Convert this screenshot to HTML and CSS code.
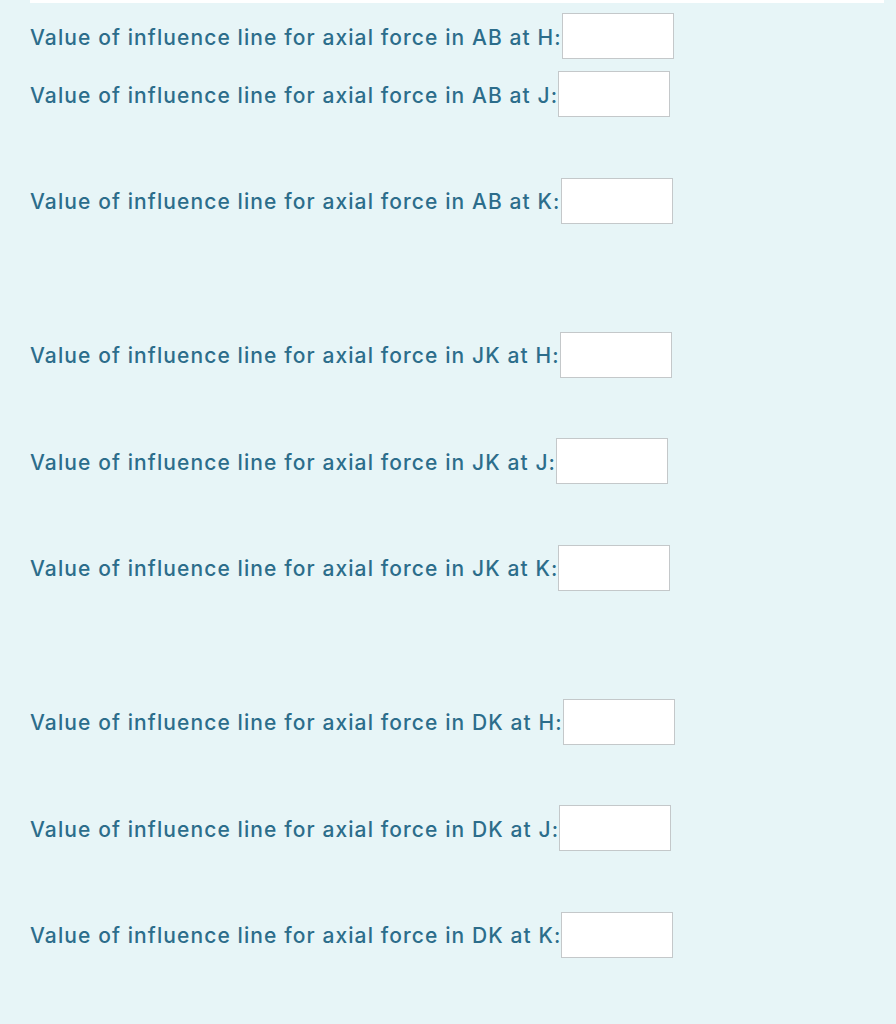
FILE: index.html
```html
<!DOCTYPE html>
<html>
<head>
<meta charset="utf-8">
<link rel="stylesheet" href="styles.css">
</head>
<body>
<div class="top-strip"></div>
<div class="form">
  <div class="row"><label>Value of influence line for axial force in AB at H:</label><input type="text"></div>
  <div class="row"><label>Value of influence line for axial force in AB at J:</label><input type="text"></div>
  <div class="row sp1"><label>Value of influence line for axial force in AB at K:</label><input type="text"></div>
  <div class="row sp2"><label>Value of influence line for axial force in JK at H:</label><input type="text"></div>
  <div class="row sp1"><label>Value of influence line for axial force in JK at J:</label><input type="text"></div>
  <div class="row sp1"><label>Value of influence line for axial force in JK at K:</label><input type="text"></div>
  <div class="row sp2"><label>Value of influence line for axial force in DK at H:</label><input type="text"></div>
  <div class="row sp1"><label>Value of influence line for axial force in DK at J:</label><input type="text"></div>
  <div class="row sp1"><label>Value of influence line for axial force in DK at K:</label><input type="text"></div>
</div>
</body>
</html>
```
FILE: styles.css
```css
html, body {
  margin: 0;
  padding: 0;
  background: #e7f5f7;
  height: 100%;
}
body {
  font-family: Inter, "Noto Sans", sans-serif;
  color: #2c6d8b;
}
.top-strip {
  height: 3px;
  margin-left: 30px;
  margin-right: 12px;
  background: #ffffff;
}
.form {
  display: flex;
  flex-direction: column;
  gap: 12px;
  padding: 10px 0 0 30px;
}
.row {
  display: flex;
  align-items: center;
  height: 46px;
}
.row.sp1 {
  margin-top: 48.5px;
}
.row.sp2 {
  margin-top: 96px;
}
.row label {
  font-size: 21px;
  font-weight: 500;
  letter-spacing: 1.1px;
  white-space: nowrap;
  position: relative;
  top: 1px;
}
.row input {
  box-sizing: border-box;
  width: 112px;
  height: 46px;
  margin: 0;
  border: 1px solid #c4c8ca;
  background: #ffffff;
  outline: none;
  padding: 0 6px;
}
```
